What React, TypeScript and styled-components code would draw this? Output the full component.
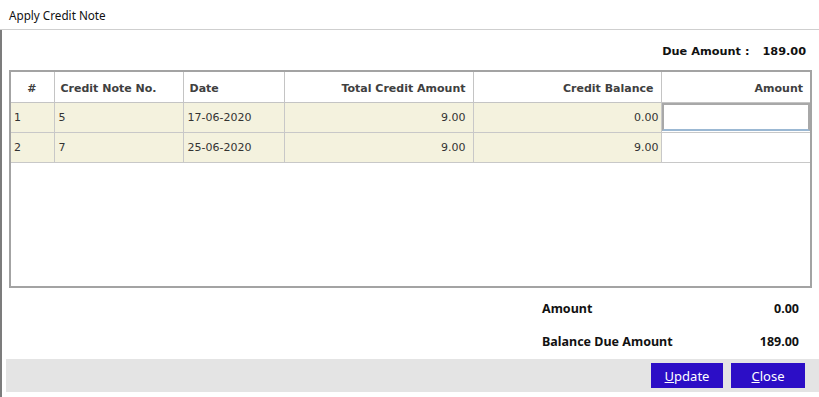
import React from 'react';
import styled, { createGlobalStyle } from 'styled-components';

const GlobalStyle = createGlobalStyle`
  html, body {
    margin: 0;
    padding: 0;
    background: #ffffff;
  }
  body {
    font-family: 'Noto Sans', 'Open Sans', Arial, sans-serif;
    color: #1a1a1a;
  }
`;

type Row = {
  no: number;
  noteNo: string;
  date: string;
  total: string;
  balance: string;
  editing?: boolean;
};

const rows: Row[] = [
  { no: 1, noteNo: '5', date: '17-06-2020', total: '9.00', balance: '0.00', editing: true },
  { no: 2, noteNo: '7', date: '25-06-2020', total: '9.00', balance: '9.00' },
];

export default function App() {
  return (
    <>
      <GlobalStyle />
      <Window>
        <TitleBar>Apply Credit Note</TitleBar>
        <Body>
          <DueRow>
            <DueLabel>Due Amount :</DueLabel>
            <DueValue>189.00</DueValue>
          </DueRow>

          <GridBox>
            <Table>
              <colgroup>
                <col style={{ width: 43 }} />
                <col style={{ width: 129 }} />
                <col style={{ width: 101 }} />
                <col style={{ width: 189 }} />
                <col style={{ width: 188 }} />
                <col />
              </colgroup>
              <thead>
                <tr>
                  <Th $align="center">#</Th>
                  <Th>Credit Note No.</Th>
                  <Th>Date</Th>
                  <Th $align="right">Total Credit Amount</Th>
                  <Th $align="right">Credit Balance</Th>
                  <Th $align="right">Amount</Th>
                </tr>
              </thead>
              <tbody>
                {rows.map((r) => (
                  <tr key={r.no}>
                    <Td $pad={3}>{r.no}</Td>
                    <Td>{r.noteNo}</Td>
                    <Td>{r.date}</Td>
                    <Td $align="right" $pad={7}>{r.total}</Td>
                    <Td $align="right" $pad={2}>{r.balance}</Td>
                    <EditCell>{r.editing && <AmountInput />}</EditCell>
                  </tr>
                ))}
              </tbody>
            </Table>
          </GridBox>

          <Summary>
            <SummaryGrid>
              <SumLabel>Amount</SumLabel>
              <SumValue>0.00</SumValue>
              <SumLabel>Balance Due Amount</SumLabel>
              <SumValue>189.00</SumValue>
            </SummaryGrid>
          </Summary>

          <Footer>
            <ActionButton>
              <u>U</u>pdate
            </ActionButton>
            <ActionButton $wide>
              <u>C</u>lose
            </ActionButton>
          </Footer>
        </Body>
      </Window>
    </>
  );
}

const Window = styled.div`
  width: 819px;
  height: 397px;
  display: flex;
  flex-direction: column;
  overflow: hidden;
`;

const TitleBar = styled.div`
  height: 30px;
  box-sizing: border-box;
  border-bottom: 1px solid #cfcfcf;
  padding-left: 9px;
  display: flex;
  align-items: center;
  font-size: 11.7px;
  color: #111;
`;

const Body = styled.div`
  flex: 1;
  display: flex;
  flex-direction: column;
  border-left: 2px solid #7c7c7c;
`;

const DueRow = styled.div`
  height: 40px;
  box-sizing: border-box;
  padding: 15px 13px 0 0;
  display: flex;
  justify-content: flex-end;
  gap: 13px;
  font-family: 'DejaVu Sans', Verdana, sans-serif;
  font-weight: bold;
  font-size: 11.3px;
  color: #111;
`;

const DueLabel = styled.span``;

const DueValue = styled.span``;

const GridBox = styled.div`
  margin-left: 7px;
  width: 803px;
  height: 218px;
  box-sizing: border-box;
  border: 2px solid #a3a3a3;
  background: #fff;
`;

const Table = styled.table`
  width: 100%;
  border-collapse: collapse;
  table-layout: fixed;
  font-family: 'DejaVu Sans', Verdana, sans-serif;
  font-size: 11px;
  color: #333;
`;

const Th = styled.th<{ $align?: 'left' | 'right' | 'center' }>`
  height: 30px;
  box-sizing: border-box;
  text-align: ${(p) => p.$align ?? 'left'};
  padding: 3px 7px 0 6px;
  font-weight: bold;
  color: #404040;
  border-right: 1px solid #c4c4c4;
  border-bottom: 1px solid #c4c4c4;
  &:last-child {
    border-right: none;
  }
`;

const Td = styled.td<{ $align?: 'left' | 'right'; $pad?: number }>`
  height: 29px;
  box-sizing: border-box;
  background: #f4f2de;
  text-align: ${(p) => p.$align ?? 'left'};
  padding: ${(p) => (p.$align === 'right' ? `0 ${p.$pad ?? 4}px 0 0` : `0 0 0 ${p.$pad ?? 4}px`)};
  border-right: 1px solid #c8c8c8;
  border-bottom: 1px solid #c8c8c8;
  white-space: nowrap;
`;

const EditCell = styled.td`
  height: 29px;
  padding: 0;
  background: #fff;
  border-bottom: 1px solid #c8c8c8;
`;

const AmountInput = styled.div`
  height: 28px;
  box-sizing: border-box;
  border: 2px solid #a8a8a8;
  border-bottom-color: #9bb8d3;
  background: #fff;
`;

const Summary = styled.div`
  height: 71px;
  box-sizing: border-box;
  padding: 4px 20px 0 0;
  display: flex;
  justify-content: flex-end;
`;

const SummaryGrid = styled.div`
  width: 257px;
  display: grid;
  grid-template-columns: 1fr auto;
  grid-auto-rows: 33px;
  align-items: center;
  font-weight: bold;
  font-size: 12.5px;
  color: #111;
`;

const SumLabel = styled.span``;

const SumValue = styled.span`
  text-align: right;
`;

const Footer = styled.div`
  margin-left: 4px;
  height: 33px;
  background: #e4e4e4;
  display: flex;
  justify-content: flex-end;
  align-items: center;
  gap: 8px;
  padding-right: 14px;
`;

const ActionButton = styled.button<{ $wide?: boolean }>`
  width: ${(p) => (p.$wide ? 74 : 72)}px;
  height: 25px;
  border: none;
  background: #2c0ec6;
  color: #fff;
  font-family: 'Noto Sans', 'Open Sans', sans-serif;
  font-size: 13px;
  padding: 0;
  cursor: pointer;
`;
